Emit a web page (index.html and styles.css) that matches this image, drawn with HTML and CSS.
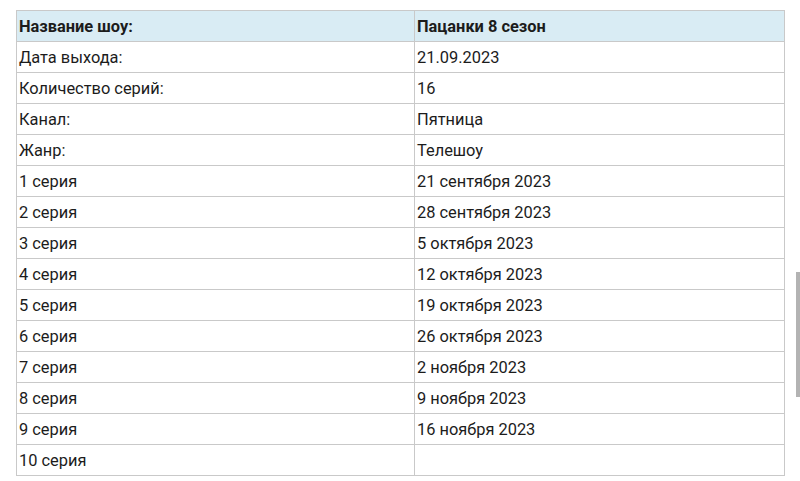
FILE: index.html
```html
<!DOCTYPE html>
<html lang="ru">
<head>
<meta charset="utf-8">
<link rel="stylesheet" href="styles.css">
</head>
<body>
<div class="page">
<table class="info">
<colgroup><col class="c1"><col class="c2"></colgroup>
<tr class="head"><td>Название шоу:</td><td>Пацанки 8 сезон</td></tr>
<tr><td>Дата выхода:</td><td>21.09.2023</td></tr>
<tr><td>Количество серий:</td><td>16</td></tr>
<tr><td>Канал:</td><td>Пятница</td></tr>
<tr><td>Жанр:</td><td>Телешоу</td></tr>
<tr><td>1 серия</td><td>21 сентября 2023</td></tr>
<tr><td>2 серия</td><td>28 сентября 2023</td></tr>
<tr><td>3 серия</td><td>5 октября 2023</td></tr>
<tr><td>4 серия</td><td>12 октября 2023</td></tr>
<tr><td>5 серия</td><td>19 октября 2023</td></tr>
<tr><td>6 серия</td><td>26 октября 2023</td></tr>
<tr><td>7 серия</td><td>2 ноября 2023</td></tr>
<tr><td>8 серия</td><td>9 ноября 2023</td></tr>
<tr><td>9 серия</td><td>16 ноября 2023</td></tr>
<tr><td>10 серия</td><td></td></tr>
</table>
<div class="scroll"></div>
</div>
</body>
</html>
```
FILE: styles.css
```css
html, body { margin: 0; padding: 0; background: #fff; }
body { font-family: Roboto, "Noto Sans", sans-serif; color: #1c1c1c; overflow: hidden; }
.page { position: relative; width: 800px; height: 481px; padding: 10px 0 0 16px; box-sizing: border-box; }
.info { border-collapse: collapse; table-layout: fixed; width: 768px; }
.c1 { width: 398px; }
.c2 { width: 370px; }
.info td { border: 1px solid #c9c9c9; height: 31px; padding: 0 2px; font-size: 16.4px; box-sizing: border-box; vertical-align: middle; }
.head td { background: #d9ecf4; font-weight: 700; }
.scroll { position: absolute; left: 796px; top: 272px; width: 4px; height: 125px; background: #b3b3b3; }
```
